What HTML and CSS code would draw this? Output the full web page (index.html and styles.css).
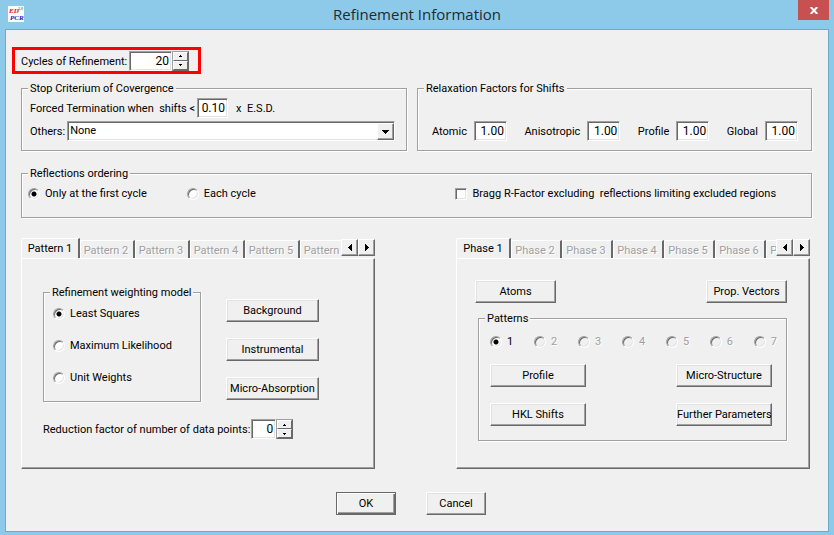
FILE: index.html
```html
<!DOCTYPE html>
<html lang="en">
<head>
<meta charset="utf-8">
<title>Refinement Information</title>
<link rel="stylesheet" href="styles.css">
</head>
<body>
<div class="window">
  <header class="titlebar">
    <svg class="app-icon" viewBox="0 0 16 16" aria-hidden="true">
      <rect width="16" height="16" fill="#fff"/>
      <text x="1" y="7" class="logo logo-red">ED</text>
      <text x="10" y="4" class="logo logo-green">2.0</text>
      <text x="2" y="14" class="logo logo-blue">PCR</text>
    </svg>
    <h1 class="title">Refinement Information</h1>
    <button class="close" type="button" aria-label="Close">
      <svg width="8" height="7" viewBox="0 0 8 7" aria-hidden="true"><path d="M0.7 0 L7.3 7 M7.3 0 L0.7 7" stroke="#fff" stroke-width="2"/></svg>
    </button>
  </header>

  <form class="content">
    <div class="cycles">
      <label for="cycles">Cycles of Refinement:</label>
      <input class="field cycles-field" id="cycles" type="text" value="20">
      <span class="spinner">
        <button type="button" aria-label="Increase cycles"><svg width="3" height="2" viewBox="0 0 3 2"><path d="M1 0h1v1h1v1H0V1h1z"/></svg></button>
        <button type="button" aria-label="Decrease cycles"><svg width="3" height="2" viewBox="0 0 3 2"><path d="M0 0h3v1H2v1H1V1H0z"/></svg></button>
      </span>
    </div>

    <div class="top-groups">
      <fieldset class="group stop">
        <legend>Stop Criterium of Covergence</legend>
        <div class="row">
          <label for="shifts">Forced Termination when&nbsp; shifts &lt;</label>
          <input class="field number" id="shifts" type="text" value="0.10">
          <label class="unit" for="shifts">x&nbsp; E.S.D.</label>
        </div>
        <div class="row others">
          <label for="others">Others:</label>
          <span class="combo">
            <select id="others"><option>None</option></select>
            <span class="combo-arrow"><svg width="7" height="4" viewBox="0 0 7 4"><path d="M0 0h7v1H6v1H5v1H4v1H3V3H2V2H1V1H0z"/></svg></span>
          </span>
        </div>
      </fieldset>
      <fieldset class="group relaxation">
        <legend>Relaxation Factors for Shifts</legend>
        <div class="factors">
          <span class="factor"><label for="atomic">Atomic</label><input class="field number" id="atomic" type="text" value="1.00"></span>
          <span class="factor"><label for="aniso">Anisotropic</label><input class="field number" id="aniso" type="text" value="1.00"></span>
          <span class="factor"><label for="profile">Profile</label><input class="field number" id="profile" type="text" value="1.00"></span>
          <span class="factor"><label for="global">Global</label><input class="field number" id="global" type="text" value="1.00"></span>
        </div>
      </fieldset>
    </div>

    <fieldset class="group ordering">
      <legend>Reflections ordering</legend>
      <div class="ordering-row">
        <label class="option"><input type="radio" name="ordering" checked>Only at the first cycle</label>
        <label class="option"><input type="radio" name="ordering">Each cycle</label>
        <label class="option"><input type="checkbox">Bragg R-Factor excluding&nbsp; reflections limiting excluded regions</label>
      </div>
    </fieldset>

    <div class="panels">
      <section class="tabbed">
        <div class="tabbar">
          <div class="tabs pattern-tabs" role="tablist">
            <button class="tab active" type="button" role="tab" aria-selected="true">Pattern 1</button>
            <button class="tab" type="button" role="tab" disabled>Pattern 2</button>
            <button class="tab" type="button" role="tab" disabled>Pattern 3</button>
            <button class="tab" type="button" role="tab" disabled>Pattern 4</button>
            <button class="tab" type="button" role="tab" disabled>Pattern 5</button>
            <button class="tab" type="button" role="tab" disabled>Pattern 6</button>
          </div>
          <button class="scroll" type="button" aria-label="Previous patterns"><svg width="4" height="7" viewBox="0 0 4 7"><path d="M4 0v7H3V6H2V5H1V4H0V3h1V2h1V1h1V0z"/></svg></button>
          <button class="scroll" type="button" aria-label="Next patterns"><svg width="4" height="7" viewBox="0 0 4 7"><path d="M0 0v7h1V6h1V5h1V4h1V3H3V2H2V1H1V0z"/></svg></button>
        </div>
        <div class="page pattern-page">
          <div class="pattern-main">
            <fieldset class="group weighting">
              <legend>Refinement weighting model</legend>
              <div class="weights">
                <label class="option"><input type="radio" name="weight" checked>Least Squares</label>
                <label class="option"><input type="radio" name="weight">Maximum Likelihood</label>
                <label class="option"><input type="radio" name="weight">Unit Weights</label>
              </div>
            </fieldset>
            <div class="pattern-buttons">
              <button class="button" type="button">Background</button>
              <button class="button" type="button">Instrumental</button>
              <button class="button" type="button">Micro-Absorption</button>
            </div>
          </div>
          <div class="reduction">
            <label for="reduction">Reduction factor of number of data points:</label>
            <input class="field reduction-field" id="reduction" type="text" value="0">
            <span class="spinner">
              <button type="button" aria-label="Increase factor"><svg width="3" height="2" viewBox="0 0 3 2"><path d="M1 0h1v1h1v1H0V1h1z"/></svg></button>
              <button type="button" aria-label="Decrease factor"><svg width="3" height="2" viewBox="0 0 3 2"><path d="M0 0h3v1H2v1H1V1H0z"/></svg></button>
            </span>
          </div>
        </div>
      </section>

      <section class="tabbed">
        <div class="tabbar">
          <div class="tabs phase-tabs" role="tablist">
            <button class="tab active" type="button" role="tab" aria-selected="true">Phase 1</button>
            <button class="tab" type="button" role="tab" disabled>Phase 2</button>
            <button class="tab" type="button" role="tab" disabled>Phase 3</button>
            <button class="tab" type="button" role="tab" disabled>Phase 4</button>
            <button class="tab" type="button" role="tab" disabled>Phase 5</button>
            <button class="tab" type="button" role="tab" disabled>Phase 6</button>
            <button class="tab" type="button" role="tab" disabled>Phase 7</button>
          </div>
          <button class="scroll" type="button" aria-label="Previous phases"><svg width="4" height="7" viewBox="0 0 4 7"><path d="M4 0v7H3V6H2V5H1V4H0V3h1V2h1V1h1V0z"/></svg></button>
          <button class="scroll" type="button" aria-label="Next phases"><svg width="4" height="7" viewBox="0 0 4 7"><path d="M0 0v7h1V6h1V5h1V4h1V3H3V2H2V1H1V0z"/></svg></button>
        </div>
        <div class="page phase-page">
          <div class="pair phase-top">
            <button class="button" type="button">Atoms</button>
            <button class="button" type="button">Prop. Vectors</button>
          </div>
          <fieldset class="group patterns">
            <legend>Patterns</legend>
            <div class="pattern-radios">
              <label class="option"><input type="radio" name="pattern" checked>1</label>
              <label class="option off"><input type="radio" name="pattern" disabled>2</label>
              <label class="option off"><input type="radio" name="pattern" disabled>3</label>
              <label class="option off"><input type="radio" name="pattern" disabled>4</label>
              <label class="option off"><input type="radio" name="pattern" disabled>5</label>
              <label class="option off"><input type="radio" name="pattern" disabled>6</label>
              <label class="option off"><input type="radio" name="pattern" disabled>7</label>
            </div>
            <div class="pair">
              <button class="button" type="button">Profile</button>
              <button class="button" type="button">Micro-Structure</button>
            </div>
            <div class="pair">
              <button class="button" type="button">HKL Shifts</button>
              <button class="button" type="button">Further Parameters</button>
            </div>
          </fieldset>
        </div>
      </section>
    </div>

    <footer class="actions">
      <button class="button default" type="button">OK</button>
      <button class="button" type="button">Cancel</button>
    </footer>
  </form>
</div>
</body>
</html>
```
FILE: styles.css
```css
* { box-sizing: border-box; }

:root {
  --face: #f0f0f0;
  --light: #e3e3e3;
  --mid: #a0a0a0;
  --dark: #696969;
}

body {
  margin: 0;
  background: #8dc9e9;
  color: #000;
  font: 11px/14px Roboto, sans-serif;
}

button, input, select {
  margin: 0;
  padding: 0;
  border: 0;
  border-radius: 0;
  font: inherit;
  color: inherit;
}

label, legend {
  padding-top: 2px;
  line-height: 12px;
  white-space: nowrap;
}

svg { display: block; flex: none; }

.window {
  display: flex;
  flex-direction: column;
  min-height: 100vh;
  padding: 0 5px 3px;
}

/* Title bar */
.titlebar {
  display: grid;
  grid-template-columns: 48px 1fr 48px;
  height: 29px;
}
.app-icon { width: 16px; height: 16px; margin: 6px 0 0 3px; }
.logo { font-family: "Liberation Serif", serif; font-weight: bold; font-style: italic; }
.logo-red { font-size: 7px; fill: #f00000; }
.logo-green { font-size: 4px; fill: #2c8a3c; }
.logo-blue { font-size: 7px; fill: #2020b0; }
.title {
  margin: 0;
  text-align: center;
  font: 15px/29px "Open Sans", "Noto Sans", sans-serif;
  color: #222b31;
}
.close {
  display: flex;
  align-items: center;
  justify-content: center;
  width: 31px;
  height: 20px;
  margin-left: 17px;
  background: #c75050;
}

.content {
  flex: 1;
  padding: 17px 16px 16px 15px;
  background: var(--face);
  border: 1px solid #6fa9c6;
}

/* Sunken fields */
.field {
  height: 20px;
  padding-right: 2px;
  background: #fff;
  border: 1px solid;
  border-color: var(--mid) #fff #fff var(--mid);
  box-shadow: inset 1px 1px 0 var(--dark), inset -1px -1px 0 var(--light);
  font-size: 12px;
  text-align: right;
}
.number { width: 33px; }

.spinner {
  display: flex;
  flex-direction: column;
  width: 17px;
  height: 20px;
  border: 1px solid;
  border-color: var(--mid) var(--dark) var(--dark) var(--mid);
}
.spinner button {
  flex: 1;
  display: flex;
  align-items: center;
  justify-content: center;
  background: var(--face);
  border: 1px solid;
  border-color: #fff var(--dark) var(--dark) #fff;
}

/* Highlighted cycles row */
.cycles {
  display: flex;
  align-items: center;
  width: 189px;
  height: 27px;
  margin-left: -9px;
  padding-left: 6px;
  border: 3px solid #f00;
}
.cycles label { flex: 1; }
.cycles-field { width: 43px; }
.cycles .spinner { margin-right: 9px; }

/* Group boxes */
.group {
  min-width: 0;
  margin: 0;
  padding: 0 0 0 6px;
  border: 1px solid var(--mid);
  box-shadow: 1px 1px 0 #fff, inset 1px 1px 0 #fff;
}
.group legend {
  padding-left: 2px;
  padding-right: 2px;
  background: var(--face);
}

.top-groups {
  display: grid;
  grid-template-columns: 386fr 395fr;
  gap: 10px;
  margin-top: 7px;
}
.row { display: flex; align-items: center; padding: 0 11px 0 2px; }
.stop { padding-top: 3px; padding-bottom: 9px; }
.stop .number { width: 31px; margin-left: 2px; }
.unit { margin-left: 8px; }
.others { margin-top: 3px; }
.combo { position: relative; flex: 1; margin-left: 2px; }
.combo select {
  display: block;
  width: 100%;
  height: 20px;
  padding-left: 2px;
  appearance: none;
  background: #fff;
  border: 1px solid;
  border-color: var(--mid) #fff #fff var(--mid);
  box-shadow: inset 1px 1px 0 var(--dark), inset -1px -1px 0 var(--light);
}
.combo-arrow {
  position: absolute;
  top: 2px;
  right: 1px;
  bottom: 1px;
  display: flex;
  align-items: center;
  justify-content: center;
  width: 17px;
  background: var(--face);
  border: 1px solid;
  border-color: #fff var(--dark) var(--dark) #fff;
  box-shadow: inset -1px -1px 0 var(--mid);
  pointer-events: none;
}

.relaxation { padding-top: 26px; padding-bottom: 9px; }
.factors { display: flex; justify-content: space-between; padding: 0 13px 0 8px; }
.factor { display: flex; align-items: center; gap: 7px; }

/* Radio buttons and tick boxes */
.option {
  display: flex;
  align-items: center;
  gap: 5px;
}
.option input {
  flex: none;
  width: 12px;
  height: 12px;
  appearance: none;
  background: #fff;
  border: 1px solid;
  border-color: var(--mid) #fff #fff var(--mid);
  box-shadow: inset 1px 1px 0 var(--dark), inset -1px -1px 0 var(--light);
}
.option input[type="radio"] { border-radius: 50%; }
.option input[type="radio"]:checked {
  background: radial-gradient(circle, #000 0 2px, #fff 3px);
}
.option input:disabled { background: var(--face); }
.off, .tab:disabled { color: var(--mid); text-shadow: 1px 1px 0 #fff; }

.ordering { margin-top: 15px; padding-top: 6px; padding-bottom: 17px; }
.ordering-row {
  display: grid;
  grid-template-columns: 159fr 269fr 356fr;
}

/* Tabbed panels */
.panels {
  display: grid;
  grid-template-columns: 1fr 1fr;
  gap: 81px;
  margin-top: 20px;
  padding-right: 2px;
}
.tabbed { min-width: 0; }
.tabbar { display: flex; height: 20px; }
.tabs {
  display: flex;
  flex: 1;
  align-items: flex-end;
  min-width: 0;
  overflow: hidden;
}
.tab {
  flex: none;
  height: 18px;
  padding: 2px 2px 0 0;
  background: var(--face);
  border: 1px solid #fff;
  border-right: 2px solid var(--dark);
  border-bottom: 0;
  border-top-left-radius: 2px;
  white-space: nowrap;
}
.tab.active { height: 20px; padding: 0; }
.pattern-tabs .tab { width: 55px; }
.pattern-tabs .active { width: 59px; }
.phase-tabs .tab { width: 51px; }
.phase-tabs .active { width: 55px; }
.scroll {
  display: flex;
  align-items: center;
  justify-content: center;
  width: 17px;
  height: 17px;
  margin-top: 1px;
  background: var(--face);
  border: 1px solid;
  border-color: #fff var(--dark) var(--dark) #fff;
  box-shadow: inset -1px -1px 0 var(--mid);
}
.page {
  border: 1px solid;
  border-color: #fff var(--dark) var(--dark) #fff;
  box-shadow: inset -1px -1px 0 var(--mid);
}
.pattern-page { padding: 26px 55px 29px 21px; }
.pattern-main {
  display: grid;
  grid-template-columns: 158fr 93fr;
  gap: 25px;
}
.weights {
  display: flex;
  flex-direction: column;
  gap: 18px;
  padding: 7px 0 17px 3px;
}
.pattern-buttons {
  display: flex;
  flex-direction: column;
  gap: 16px;
  padding-top: 14px;
}
.reduction { display: flex; align-items: center; margin-top: 17px; }
.reduction-field { width: 25px; margin-left: 1px; }

.button {
  height: 23px;
  background: var(--face);
  border: 1px solid;
  border-color: #fff var(--dark) var(--dark) #fff;
  box-shadow: inset -1px -1px 0 var(--mid), inset 1px 1px 0 var(--light);
  white-space: nowrap;
}

.phase-page { padding: 21px 22px 27px 18px; }
.pair { display: flex; justify-content: space-between; }
.phase-top .button { width: 81px; }
.patterns { margin: 8px 0 0 3px; padding: 9px 9px 14px 11px; }
.patterns legend { margin-left: -5px; }
.pattern-radios { display: flex; justify-content: space-between; margin-bottom: 16px; }
.patterns .pair { padding-right: 5px; }
.patterns .pair .button { width: 96px; }
.patterns .pair + .pair { margin-top: 16px; }

/* Dialog buttons */
.actions {
  display: flex;
  justify-content: center;
  gap: 30px;
  margin-top: 23px;
  padding-right: 11px;
}
.actions .button { width: 60px; }
.actions .default {
  border-color: var(--dark);
  box-shadow: inset 1px 1px 0 #fff, inset -1px -1px 0 var(--dark), inset -2px -2px 0 var(--mid);
}
```
